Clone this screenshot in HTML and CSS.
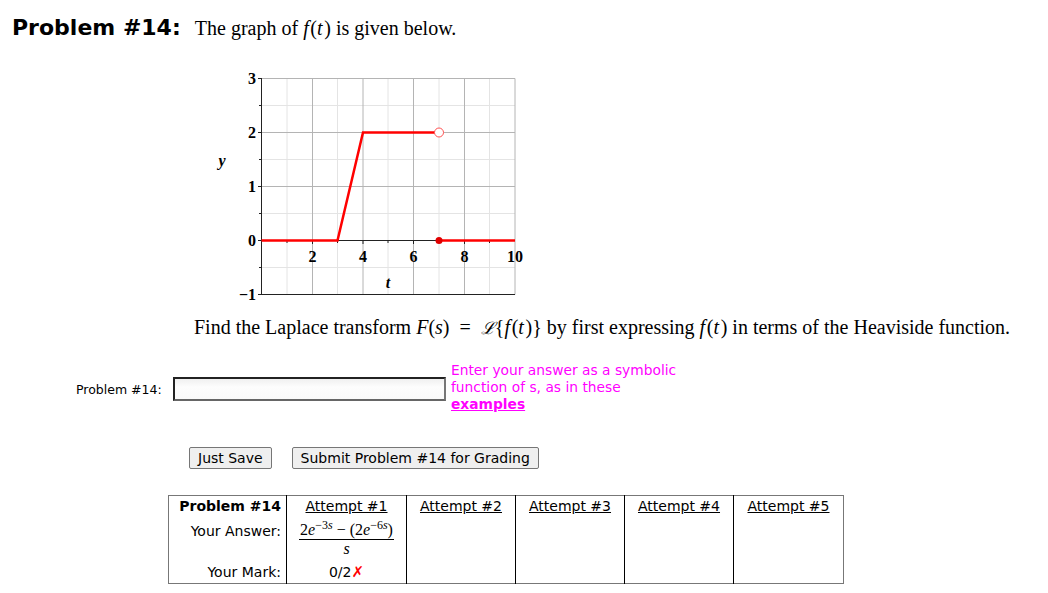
FILE: index.html
```html
<!DOCTYPE html>
<html>
<head>
<meta charset="utf-8">
<link rel="stylesheet" href="styles.css">
</head>
<body>
<div class="head"><span class="pnum">Problem #14:</span> <span class="serif">The graph of <i>f</i>&#8202;(<i>t</i>&#8202;) is given below.</span></div>

<div class="graph">
<svg width="340" height="240" viewBox="0 0 340 240" xmlns="http://www.w3.org/2000/svg">
  <g stroke="#e4e4e4" stroke-width="1">
    <line x1="97" y1="16.5" x2="97" y2="232.5"/>
    <line x1="147.5" y1="16.5" x2="147.5" y2="232.5"/>
    <line x1="198" y1="16.5" x2="198" y2="232.5"/>
    <line x1="249" y1="16.5" x2="249" y2="232.5"/>
    <line x1="299.5" y1="16.5" x2="299.5" y2="232.5"/>
    <line x1="71.5" y1="43.5" x2="325" y2="43.5"/>
    <line x1="71.5" y1="97.5" x2="325" y2="97.5"/>
    <line x1="71.5" y1="151.5" x2="325" y2="151.5"/>
    <line x1="71.5" y1="205.5" x2="325" y2="205.5"/>
  </g>
  <g stroke="#b4b4b4" stroke-width="1">
    <line x1="122.5" y1="16.5" x2="122.5" y2="232.5"/>
    <line x1="173" y1="16.5" x2="173" y2="232.5"/>
    <line x1="223.5" y1="16.5" x2="223.5" y2="232.5"/>
    <line x1="274.5" y1="16.5" x2="274.5" y2="232.5"/>
    <line x1="325" y1="16.5" x2="325" y2="232.5"/>
    <line x1="71.5" y1="16.5" x2="325" y2="16.5"/>
    <line x1="71.5" y1="70.5" x2="325" y2="70.5"/>
    <line x1="71.5" y1="124.5" x2="325" y2="124.5"/>
  </g>
  <g stroke="#222" stroke-width="1">
    <line x1="71.5" y1="16" x2="71.5" y2="233"/>
    <line x1="71.5" y1="178.5" x2="325" y2="178.5"/>
    <line x1="71.5" y1="232.5" x2="325" y2="232.5"/>
    <line x1="68" y1="16.5" x2="71.5" y2="16.5"/>
    <line x1="69" y1="43.5" x2="71.5" y2="43.5"/>
    <line x1="68" y1="70.5" x2="71.5" y2="70.5"/>
    <line x1="69" y1="97.5" x2="71.5" y2="97.5"/>
    <line x1="68" y1="124.5" x2="71.5" y2="124.5"/>
    <line x1="69" y1="151.5" x2="71.5" y2="151.5"/>
    <line x1="68" y1="178.5" x2="71.5" y2="178.5"/>
    <line x1="69" y1="205.5" x2="71.5" y2="205.5"/>
    <line x1="68" y1="232.5" x2="71.5" y2="232.5"/>
    <line x1="97" y1="178.5" x2="97" y2="181"/>
    <line x1="122.5" y1="178.5" x2="122.5" y2="182"/>
    <line x1="147.5" y1="178.5" x2="147.5" y2="181"/>
    <line x1="173" y1="178.5" x2="173" y2="182"/>
    <line x1="198" y1="178.5" x2="198" y2="181"/>
    <line x1="223.5" y1="178.5" x2="223.5" y2="182"/>
    <line x1="249" y1="178.5" x2="249" y2="181"/>
    <line x1="274.5" y1="178.5" x2="274.5" y2="182"/>
    <line x1="299.5" y1="178.5" x2="299.5" y2="181"/>
  </g>
  <g class="tick">
    <text x="66" y="22" text-anchor="end">3</text>
    <text x="66" y="76" text-anchor="end">2</text>
    <text x="66" y="130" text-anchor="end">1</text>
    <text x="66" y="184" text-anchor="end">0</text>
    <text x="66" y="238" text-anchor="end">−1</text>
    <text x="122.5" y="200" text-anchor="middle">2</text>
    <text x="173" y="200" text-anchor="middle">4</text>
    <text x="223.5" y="200" text-anchor="middle">6</text>
    <text x="274.5" y="200" text-anchor="middle">8</text>
    <text x="325" y="200" text-anchor="middle">10</text>
  </g>
  <text class="axlab" x="32" y="104" text-anchor="middle">y</text>
  <text class="axlab" x="198" y="226" text-anchor="middle">t</text>
  <polyline points="71.5,178.5 147.5,178.5 173,70.5 245,70.5" fill="none" stroke="#ff0000" stroke-width="2.5"/>
  <circle cx="249" cy="70.5" r="4.5" fill="#fff" stroke="#ff5050" stroke-width="1"/>
  <line x1="249" y1="178.5" x2="325" y2="178.5" stroke="#ff0000" stroke-width="2.5"/>
  <circle cx="249" cy="178.5" r="3.5" fill="#e00000"/>
</svg>
</div>

<p class="find">Find the Laplace transform <i>F</i>(<i>s</i>) &nbsp;=&nbsp; <span class="script">ℒ</span>{<i>f</i>&#8202;(<i>t</i>&#8202;)} by first expressing <i>f</i>&#8202;(<i>t</i>&#8202;) in terms of the Heaviside function.</p>

<div class="answer-row">
  <label class="alabel">Problem #14:</label>
  <input class="ans" type="text">
  <div class="hint">Enter your answer as a symbolic<br>function of s, as in these<br><a class="ex" href="#">examples</a></div>
</div>

<div class="buttons">
  <button class="btn">Just Save</button>
  <button class="btn">Submit Problem #14 for Grading</button>
</div>

<table class="attempts">
  <tr class="r1">
    <td class="lab"><b>Problem #14</b></td>
    <td class="att"><a href="#">Attempt #1</a></td>
    <td class="att"><a href="#">Attempt #2</a></td>
    <td class="att"><a href="#">Attempt #3</a></td>
    <td class="att"><a href="#">Attempt #4</a></td>
    <td class="att"><a href="#">Attempt #5</a></td>
  </tr>
  <tr class="r2">
    <td class="lab">Your Answer:</td>
    <td class="att"><span class="frac"><span class="num">2<i>e</i><sup>−3<i>s</i></sup> − (2<i>e</i><sup>−6<i>s</i></sup>)</span><span class="den"><i>s</i></span></span></td>
    <td></td><td></td><td></td><td></td>
  </tr>
  <tr class="r3">
    <td class="lab">Your Mark:</td>
    <td class="att">0/2<span class="x">✗</span></td>
    <td></td><td></td><td></td><td></td>
  </tr>
</table>
</body>
</html>
```

FILE: styles.css
```css
html, body {
  margin: 0;
  padding: 0;
  background: #fff;
  color: #000;
  font-family: "DejaVu Sans", Verdana, sans-serif;
}

.head {
  margin: 14px 0 0 12px;
  height: 28px;
  line-height: 28px;
  white-space: nowrap;
}

.pnum {
  font-weight: bold;
  font-size: 22px;
}

.serif {
  font-family: "Liberation Serif", "Times New Roman", serif;
  font-size: 20px;
  margin-left: 9px;
}

.graph {
  margin: 20px 0 0 190px;
  width: 340px;
  height: 240px;
}

.graph svg {
  display: block;
}

.tick {
  font-family: "Liberation Serif", serif;
  font-weight: bold;
  font-size: 16px;
  fill: #000;
}

.axlab {
  font-family: "Liberation Serif", serif;
  font-style: italic;
  font-weight: bold;
  font-size: 16px;
  fill: #000;
}

.find {
  margin: 13px 0 0 194px;
  font-family: "Liberation Serif", "Times New Roman", serif;
  font-size: 20px;
  line-height: 24px;
  white-space: nowrap;
}

.script {
  font-family: "DejaVu Serif", serif;
  font-style: italic;
  font-size: 17px;
}

.answer-row {
  margin-top: 22px;
  padding-left: 76px;
  display: flex;
  align-items: center;
}

.alabel {
  width: 97px;
  font-size: 12.5px;
  padding-top: 3px;
}

.ans {
  box-sizing: border-box;
  width: 273px;
  height: 24px;
  margin: 2px 0 0 0;
  padding: 0;
  border-style: solid;
  border-width: 2px;
  border-color: #222 #777 #666 #222;
  background: linear-gradient(#f0f0f0, #fdfdfd 40%, #fafafa);
}

.hint {
  margin-left: 5px;
  color: #ff00ff;
  font-size: 13.8px;
  line-height: 17px;
}

.ex {
  color: #ff00ff;
  font-weight: bold;
  text-decoration: underline;
}

.buttons {
  margin: 34px 0 0 189px;
  display: flex;
  gap: 20px;
}

.btn {
  height: 22px;
  padding: 0 8px;
  font-family: "DejaVu Sans", Verdana, sans-serif;
  font-size: 14px;
  color: #000;
  background: #efefef;
  border: 1px solid #767676;
  border-radius: 2px;
}

.attempts {
  margin: 26px 0 0 168px;
  border-collapse: collapse;
  border: 1px solid #777;
  font-size: 14px;
  line-height: 18px;
}

.attempts td {
  box-sizing: border-box;
  padding: 0 5px;
  vertical-align: middle;
  border-left: 1px solid #000;
  border-right: 1px solid #000;
}

.attempts td:first-child {
  border-left: 1px solid #777;
}

.attempts td:last-child {
  border-right: 1px solid #777;
}

.attempts td:nth-child(1) { width: 118px; }
.attempts td:nth-child(2) { width: 120px; }
.attempts td:nth-child(3) { width: 109px; }
.attempts td:nth-child(4) { width: 109px; }
.attempts td:nth-child(5) { width: 109px; }
.attempts td:nth-child(6) { width: 110px; }

.r1 td {
  height: 21px;
  vertical-align: top;
  padding-top: 1px;
}

.r2 td {
  height: 42px;
  vertical-align: top;
}

.r2 td.lab {
  padding-top: 5px;
}

.r3 td {
  height: 25px;
  padding-top: 2px;
}

.lab {
  text-align: right;
}

.att {
  text-align: center;
}

.att a {
  color: #000;
  text-decoration: underline;
}

.frac {
  display: inline-flex;
  flex-direction: column;
  align-items: center;
  font-family: "Liberation Serif", serif;
  font-size: 16px;
  vertical-align: top;
}

.num {
  border-bottom: 1px solid #000;
  padding: 4px 1px 0;
  line-height: 18px;
}

.num sup {
  font-size: 12px;
  line-height: 0;
}

.den {
  line-height: 18px;
}

.x {
  color: #ff0000;
  font-weight: bold;
  font-size: 15px;
}
```
